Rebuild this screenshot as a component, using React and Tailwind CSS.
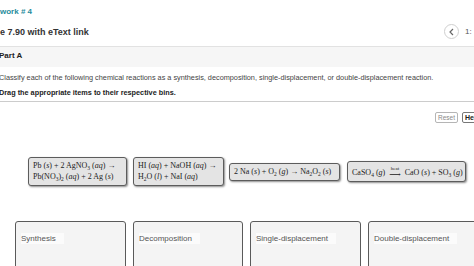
import React from "react";

const I = ({ children }) => <i className="italic">{children}</i>;
const Sub = ({ children }) => (
  <sub className="text-[5.5px] align-baseline relative top-[2px]">{children}</sub>
);

function Card({ className, children }) {
  return (
    <div
      className={
        "shrink-0 overflow-hidden rounded-[3px] border-[1.5px] border-[#5c5c5c] bg-[#e4e4e4] shadow-[1px_1px_2px_rgba(0,0,0,0.45)] px-[4px] text-[8px] leading-[11px] text-[#222] whitespace-nowrap " +
        className
      }
      style={{ fontFamily: '"Liberation Serif", "DejaVu Serif", serif' }}
    >
      {children}
    </div>
  );
}

function Bin({ label, className }) {
  return (
    <div
      className={
        "shrink-0 h-[60px] rounded-t-[3px] border border-[#5a5a5a] bg-[#f4f4f4] px-[5px] pt-[2px] " +
        className
      }
    >
      <span className="inline-block bg-[#fbfbfb] pr-[8px] text-[8px] leading-[11px] text-[#555]">
        {label}
      </span>
    </div>
  );
}

export default function App() {
  return (
    <div
      className="relative w-[474px] h-[266px] overflow-hidden bg-white text-[#333]"
      style={{ fontFamily: '"Liberation Sans", Arial, sans-serif' }}
    >
      {/* header */}
      <div className="h-[47px] flex border-b border-[#e2e2e2]">
        <div className="flex-1 flex flex-col">
          <div className="h-[12px] mt-[6px] text-[8px] font-bold leading-[12px] text-[#1f8c9c]">
            work # 4
          </div>
          <div className="mt-[8px] text-[9px] font-bold leading-[12px] text-[#333]">
            e 7.90 with eText link
          </div>
        </div>
        <div className="flex items-start pt-[24px] gap-[6px] shrink-0 w-[30px]">
          <div className="w-[15px] h-[15px] rounded-full border border-[#cfcfcf] flex items-center justify-center text-[#777]">
            <svg width="7" height="8" viewBox="0 0 7 8">
              <path d="M5 1 L2 4 L5 7" fill="none" stroke="#666" strokeWidth="1.2" />
            </svg>
          </div>
          <span className="text-[8px] leading-[15px] text-[#555] whitespace-nowrap">1:</span>
        </div>
      </div>

      {/* Part A band */}
      <div className="h-[20px] bg-[#f6f6f6] flex items-center">
        <span className="text-[8px] font-bold leading-[10px] text-[#222] -ml-[1px] mt-[-3px]">Part A</span>
      </div>

      {/* instructions */}
      <div className="-ml-[1px] pt-[6px] text-[7.3px] leading-[9px] text-[#444] whitespace-nowrap">
        Classify each of the following chemical reactions as a synthesis, decomposition, single-displacement, or double-displacement reaction.
      </div>
      <div className="-ml-[1px] pt-[6px] text-[7.3px] font-bold leading-[9px] text-[#222] whitespace-nowrap">
        Drag the appropriate items to their respective bins.
      </div>
      <div className="mt-[4px] border-b border-[#cccccc]"></div>

      {/* buttons */}
      <div className="flex justify-end gap-[4px] mt-[10px] -mr-[12px]">
        <div className="h-[11px] w-[23px] flex items-center justify-center rounded-[2px] border border-[#b5b5b5] bg-white text-[6.5px] leading-[9px] text-[#888]">
          Reset
        </div>
        <div className="h-[11px] w-[24px] pl-[2px] flex items-center rounded-[2px] border border-[#777] bg-white text-[7px] font-bold leading-[9px] text-[#222]">
          Help
        </div>
      </div>

      {/* cards */}
      <div className="flex items-center mt-[34px] ml-[28px] h-[29px]">
        <Card className="w-[99px] h-[29px] pt-[2px]">
          <div>
            Pb (<I>s</I>) + 2 AgNO<Sub>3</Sub> (<I>aq</I>) →
          </div>
          <div>
            Pb(NO<Sub>3</Sub>)<Sub>2</Sub> (<I>aq</I>) + 2 Ag (<I>s</I>)
          </div>
        </Card>
        <Card className="w-[91px] h-[29px] pt-[2px] ml-[6px]">
          <div>
            HI (<I>aq</I>) + NaOH (<I>aq</I>) →
          </div>
          <div>
            H<Sub>2</Sub>O (<I>l</I>) + NaI (<I>aq</I>)
          </div>
        </Card>
        <Card className="w-[111px] h-[18px] ml-[5px] flex items-center">
          <div>
            2 Na (<I>s</I>) + O<Sub>2</Sub> (<I>g</I>) → Na<Sub>2</Sub>O<Sub>2</Sub> (<I>s</I>)
          </div>
        </Card>
        <Card className="w-[119px] h-[21px] ml-[7px] flex items-center">
          <div className="flex items-end">
            <span>
              CaSO<Sub>4</Sub> (<I>g</I>)
            </span>
            <span className="inline-flex flex-col items-center mx-[4px] relative top-[1px]">
              <span className="text-[5px] leading-[5px]">heat</span>
              <span className="leading-[8px]">⟶</span>
            </span>
            <span>
              CaO (<I>s</I>) + SO<Sub>3</Sub> (<I>g</I>)
            </span>
          </div>
        </Card>
      </div>

      {/* bins */}
      <div className="flex gap-[7px] ml-[15px] mt-[35px]">
        <Bin label="Synthesis" className="w-[111px]" />
        <Bin label="Decomposition" className="w-[110px]" />
        <Bin label="Single-displacement" className="w-[111px]" />
        <Bin label="Double-displacement" className="w-[111px]" />
      </div>
    </div>
  );
}
